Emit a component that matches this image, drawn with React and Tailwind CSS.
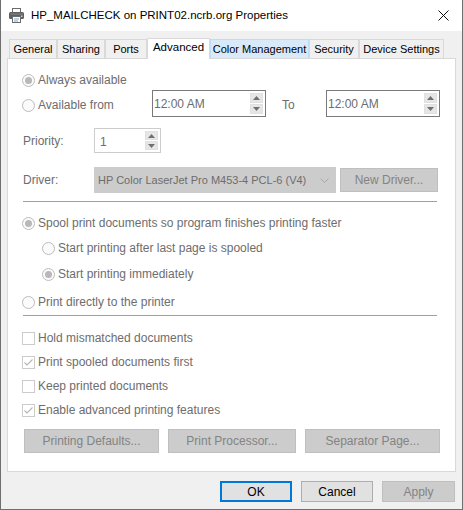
import React from 'react'

const tabs = [
  { label: 'General', w: 'w-[48px]' },
  { label: 'Sharing', w: 'w-[48px]' },
  { label: 'Ports', w: 'w-[42px]' },
  { label: 'Advanced', w: 'w-[63px]', active: true },
  { label: 'Color Management', w: 'w-[99px]', hover: true },
  { label: 'Security', w: 'w-[50px]' },
  { label: 'Device Settings', w: 'w-[85px]' },
]

function PrinterIcon() {
  return (
    <svg width="17" height="16" viewBox="0 0 17 16">
      <rect x="4.5" y="1.5" width="8" height="4" fill="#fff" stroke="#6b6b6b" />
      <rect x="1" y="5" width="15" height="7" rx="1.5" fill="#5f5f5f" />
      <rect x="2.5" y="6.5" width="12" height="1" fill="#8a8a8a" />
      <rect x="13" y="8.5" width="1.5" height="1.5" fill="#d0d0d0" />
      <rect x="4.5" y="9.5" width="8" height="6" fill="#fff" stroke="#6b6b6b" />
      <rect x="6" y="11.5" width="5" height="1" fill="#7aa7d6" />
      <rect x="6" y="13.5" width="4" height="1" fill="#7aa7d6" />
    </svg>
  )
}

function Radio({ checked }) {
  return (
    <span className="w-[13px] h-[13px] rounded-full border border-[#bcbcbc] bg-[#fbfbfb] flex items-center justify-center shrink-0">
      {checked && <span className="w-[7px] h-[7px] rounded-full bg-[#b8b8b8]" />}
    </span>
  )
}

function Check({ checked }) {
  return (
    <span className="w-[13px] h-[13px] border border-[#cccccc] bg-white flex items-center justify-center shrink-0">
      {checked && (
        <svg width="11" height="11" viewBox="0 0 11 11">
          <path d="M1.5 5.5 L4 8 L9.5 2.5" fill="none" stroke="#b5b5b5" strokeWidth="1.1" />
        </svg>
      )}
    </span>
  )
}

function SpinArrows() {
  return (
    <div className="flex flex-col gap-px w-[13px] mr-[2px] my-[2px]">
      <div className="flex-1 bg-[#e6e6e6] border border-[#e0e0e0] flex items-center justify-center">
        <svg width="7" height="4" viewBox="0 0 7 4"><path d="M0 4 L3.5 0 L7 4 Z" fill="#707070" /></svg>
      </div>
      <div className="flex-1 bg-[#e6e6e6] border border-[#e0e0e0] flex items-center justify-center">
        <svg width="7" height="4" viewBox="0 0 7 4"><path d="M0 0 L3.5 4 L7 0 Z" fill="#707070" /></svg>
      </div>
    </div>
  )
}

function TimeBox() {
  return (
    <div className="w-[114px] h-[27px] border border-[#7a7a7a] bg-white flex items-stretch">
      <span className="flex-1 pl-[1px] pt-[4px] text-[#6d6d6d]">12:00 AM</span>
      <SpinArrows />
    </div>
  )
}

function GrayButton({ w, children }) {
  return (
    <div className={`${w} h-[24px] bg-[#cccccc] border border-[#bfbfbf] text-[#838383] flex items-center justify-center whitespace-nowrap`}>
      {children}
    </div>
  )
}

export default function App() {
  return (
    <div
      className="w-[463px] h-[510px] bg-[#f0f0f0] border-l border-r border-b border-[#6f6f6f] flex flex-col text-[12px] text-black"
      style={{ fontFamily: '"Liberation Sans", Arial, sans-serif' }}
    >
      {/* Title bar */}
      <div className="h-[31px] bg-white flex items-center shrink-0">
        <div className="ml-[7px] mt-[-1px]">
          <PrinterIcon />
        </div>
        <span className="ml-[6px] text-[11.5px] whitespace-nowrap">HP_MAILCHECK on PRINT02.ncrb.org Properties</span>
        <div className="ml-auto mr-[13px] w-[11px] h-[11px] flex items-center justify-center">
          <svg width="11" height="11" viewBox="0 0 11 11">
            <path d="M0.5 0.5 L10.5 10.5 M10.5 0.5 L0.5 10.5" stroke="#111" strokeWidth="1" />
          </svg>
        </div>
      </div>

      {/* Tabs */}
      <div className="h-[27px] flex items-end pl-[8px] shrink-0 text-[11px] whitespace-nowrap">
        {tabs.map((t) => (
          <div
            key={t.label}
            className={
              t.active
                ? `${t.w} h-[21px] bg-white border border-b-0 border-[#d9d9d9] relative z-10 mb-[-1px] pb-[3px] flex items-center justify-center text-[11.5px]`
                : t.hover
                ? `${t.w} h-[19px] bg-[#d8eaf9] border border-[#c0dcf3] border-b-0 flex items-center justify-center pt-[1px]`
                : `${t.w} h-[19px] bg-[#f0f0f0] border border-[#d9d9d9] border-b-0 flex items-center justify-center pt-[1px]`
            }
          >
            {t.label}
          </div>
        ))}
      </div>

      {/* Panel */}
      <div className="mx-[6px] h-[414px] bg-white border border-[#d9d9d9] pl-[14px] pr-[15px] pt-[9px] flex flex-col text-[#6d6d6d] shrink-0">
        <div className="h-[20px] mt-[2px] flex items-center gap-[3px]">
          <Radio checked />
          <span>Always available</span>
        </div>

        <div className="h-[27px] flex items-center">
          <div className="w-[130px] flex items-center gap-[3px] pt-[3px]">
            <Radio />
            <span>Available from</span>
          </div>
          <TimeBox />
          <span className="ml-[16px] w-[44px] pt-[2px]">To</span>
          <TimeBox />
        </div>

        <div className="h-[25px] mt-[11px] flex items-center">
          <span className="w-[72px] pl-[1px]">Priority:</span>
          <div className="w-[67px] h-[25px] border border-[#cccccc] bg-white flex items-stretch">
            <span className="flex-1 pl-[5px] pt-[4px]">1</span>
            <SpinArrows />
          </div>
        </div>

        <div className="h-[26px] mt-[14px] flex items-center">
          <span className="w-[72px] pl-[1px]">Driver:</span>
          <div className="w-[242px] h-[26px] bg-[#cccccc] border border-[#cccccc] flex items-center pl-[3px] pr-[6px] overflow-hidden">
            <span className="flex-1 text-[11px] whitespace-nowrap">HP Color LaserJet Pro M453-4 PCL-6 (V4)</span>
            <svg width="9" height="5" viewBox="0 0 9 5">
              <path d="M0.5 0.5 L4.5 4.5 L8.5 0.5" fill="none" stroke="#a8a8a8" />
            </svg>
          </div>
          <div className="ml-[4px]">
            <GrayButton w="w-[98px]">New Driver...</GrayButton>
          </div>
        </div>

        <div className="mt-[8px] ml-[1px] w-[414px] h-px bg-[#a0a0a0]" />

        <div className="h-[20px] mt-[11px] flex items-center gap-[3px]">
          <Radio checked />
          <span>Spool print documents so program finishes printing faster</span>
        </div>
        <div className="h-[20px] mt-[5px] pl-[20px] flex items-center gap-[3px]">
          <Radio />
          <span>Start printing after last page is spooled</span>
        </div>
        <div className="h-[20px] mt-[6px] pl-[20px] flex items-center gap-[3px]">
          <Radio checked />
          <span>Start printing immediately</span>
        </div>
        <div className="h-[20px] mt-[8px] flex items-center gap-[3px]">
          <Radio />
          <span>Print directly to the printer</span>
        </div>

        <div className="mt-[3px] ml-[1px] w-[414px] h-px bg-[#a0a0a0]" />

        <div className="h-[20px] mt-[12px] flex items-center gap-[3px]">
          <Check />
          <span>Hold mismatched documents</span>
        </div>
        <div className="h-[20px] mt-[4px] flex items-center gap-[3px]">
          <Check checked />
          <span>Print spooled documents first</span>
        </div>
        <div className="h-[20px] mt-[4px] flex items-center gap-[3px]">
          <Check />
          <span>Keep printed documents</span>
        </div>
        <div className="h-[20px] mt-[4px] flex items-center gap-[3px]">
          <Check checked />
          <span>Enable advanced printing features</span>
        </div>

        <div className="mt-[9px] ml-[2px] flex gap-[9px]">
          <GrayButton w="w-[135px]">Printing Defaults...</GrayButton>
          <GrayButton w="w-[128px]">Print Processor...</GrayButton>
          <GrayButton w="w-[135px]">Separator Page...</GrayButton>
        </div>
      </div>

      {/* Dialog buttons */}
      <div className="mt-[9px] flex justify-end gap-[9px] pr-[7px]">
        <div className="w-[72px] h-[21px] bg-[#e1e1e1] border-2 border-[#0078d7] flex items-center justify-center">OK</div>
        <div className="w-[72px] h-[21px] bg-[#e1e1e1] border border-[#adadad] flex items-center justify-center">Cancel</div>
        <div className="w-[73px] h-[21px] bg-[#cccccc] border border-[#bfbfbf] text-[#838383] flex items-center justify-center">Apply</div>
      </div>
    </div>
  )
}
